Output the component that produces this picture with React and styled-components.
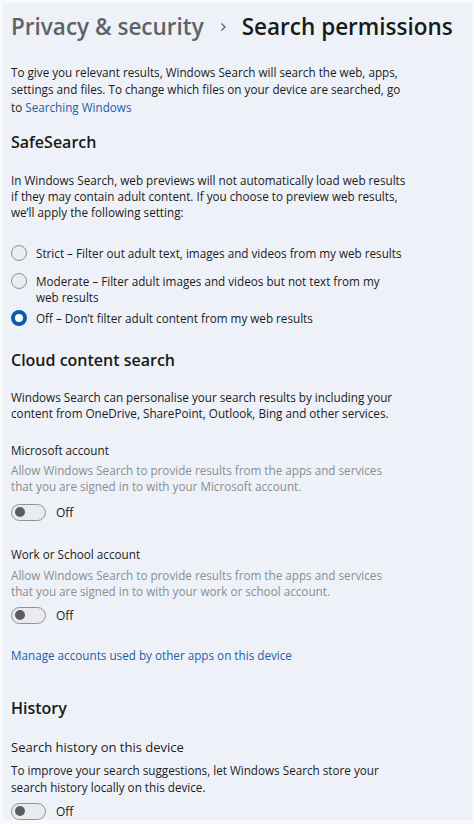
import React from 'react'
import styled, {createGlobalStyle} from 'styled-components'

const GlobalStyle = createGlobalStyle`
  html, body {
    margin: 0;
    padding: 0;
    background: #f8f9fb;
  }
  body {
    font-family: 'Open Sans', 'Noto Sans', 'Liberation Sans', sans-serif;
    font-stretch: 90%;
    color: #1b1b1b;
  }
`

const Panel = styled.div`
  margin: 3px 0 0 3px;
  width: 469px;
  height: 817px;
  padding: 7px 0 0 8px;
  box-sizing: border-box;
  background: #eef2f8;
  overflow: hidden;
  display: flex;
  flex-direction: column;
`

const Breadcrumb = styled.div`
  display: flex;
  align-items: center;
  gap: 15px;
  height: 34px;
  font-size: 22.5px;
  font-weight: 600;
  white-space: nowrap;
`

const Crumb = styled.span`
  color: ${p => (p.$current ? '#1a1a1a' : '#5f6266')};
`

const Chevron = styled.svg`
  width: 8px;
  height: 12px;
  flex: none;
`

const Text = styled.p`
  margin: ${p => p.$mt || 0}px 0 0;
  font-size: ${p => p.$size || 11.7}px;
  line-height: ${p => p.$lh || 16}px;
  color: ${p => (p.$muted ? '#8b8d90' : '#1b1b1b')};
  white-space: nowrap;
`

const Link = styled.a`
  color: #1f5ca8;
  text-decoration: none;
`

const Heading = styled.h2`
  margin: ${p => p.$mt || 0}px 0 0;
  font-size: 16px;
  line-height: 24px;
  font-weight: 600;
  color: #1a1a1a;
`

const RadioList = styled.div`
  display: flex;
  flex-direction: column;
  margin-top: 25px;
`

const RadioRow = styled.label`
  display: flex;
  align-items: flex-start;
  gap: 9px;
  margin-top: ${p => p.$mt || 0}px;
  font-size: 11.7px;
  line-height: 16px;
  color: #1b1b1b;
`

const RadioDot = styled.span`
  flex: none;
  width: 16px;
  height: 16px;
  border-radius: 50%;
  box-sizing: border-box;
  border: ${p => (p.$checked ? '4.5px solid #0b5cad' : '1px solid #8e9196')};
  background: ${p => (p.$checked ? '#ffffff' : '#e9ecf0')};
`

const ToggleRow = styled.div`
  display: flex;
  align-items: center;
  gap: 10px;
  margin-top: ${p => p.$mt || 0}px;
  height: 18px;
  font-size: 12px;
  color: #1b1b1b;
`

const Switch = styled.span`
  width: 35px;
  height: 17px;
  box-sizing: border-box;
  border: 1px solid #8e9196;
  border-radius: 9px;
  background: #e9ebee;
  display: flex;
  align-items: center;
  padding-left: 3px;
`

const Knob = styled.span`
  width: 10px;
  height: 10px;
  border-radius: 50%;
  background: #5b5d60;
`

const LinkLine = styled.div`
  margin-top: ${p => p.$mt || 0}px;
  font-size: 11.7px;
  line-height: 18px;
`

const Toggle = ({mt}) => (
    <ToggleRow $mt={mt}>
        <Switch><Knob/></Switch>
        Off
    </ToggleRow>
)

const radios = [
    {label: ['Strict – Filter out adult text, images and videos from my web results'], mt: 0},
    {label: ['Moderate – Filter adult images and videos but not text from my', 'web results'], mt: 12},
    {label: ['Off – Don’t filter adult content from my web results'], mt: 5, checked: true},
]

const Lines = ({lines}) => lines.map((l, i) => (
    <React.Fragment key={i}>{i > 0 && <br/>}{l}</React.Fragment>
))

const App = () => {
    return (
        <>
            <GlobalStyle/>
            <Panel>
                <Breadcrumb>
                    <Crumb>Privacy &amp; security</Crumb>
                    <Chevron viewBox="0 0 8 12">
                        <path d="M2.5 2.5l3.5 3.5-3.5 3.5" fill="none" stroke="#5f6266" strokeWidth="1.3"/>
                    </Chevron>
                    <Crumb $current>Search permissions</Crumb>
                </Breadcrumb>

                <Text $mt={20} $lh={17.5}>
                    To give you relevant results, Windows Search will search the web, apps,<br/>
                    settings and files. To change which files on your device are searched, go<br/>
                    to <Link href="#">Searching Windows</Link>
                </Text>

                <Heading $mt={14}>SafeSearch</Heading>
                <Text $mt={18}>
                    In Windows Search, web previews will not automatically load web results<br/>
                    if they may contain adult content. If you choose to preview web results,<br/>
                    we’ll apply the following setting:
                </Text>

                <RadioList>
                    {radios.map(r => (
                        <RadioRow key={r.label[0]} $mt={r.mt}>
                            <RadioDot $checked={r.checked}/>
                            <span><Lines lines={r.label}/></span>
                        </RadioRow>
                    ))}
                </RadioList>

                <Heading $mt={22}>Cloud content search</Heading>
                <Text $mt={18} $lh={15.5}>
                    Windows Search can personalise your search results by including your<br/>
                    content from OneDrive, SharePoint, Outlook, Bing and other services.
                </Text>

                <Text $mt={20} $lh={18}>Microsoft account</Text>
                <Text $mt={3} $muted>
                    Allow Windows Search to provide results from the apps and services<br/>
                    that you are signed in to with your Microsoft account.
                </Text>
                <Toggle mt={9}/>

                <Text $mt={24} $lh={18}>Work or School account</Text>
                <Text $mt={4} $muted>
                    Allow Windows Search to provide results from the apps and services<br/>
                    that you are signed in to with your work or school account.
                </Text>
                <Toggle mt={7}/>

                <LinkLine $mt={22}>
                    <Link href="#">Manage accounts used by other apps on this device</Link>
                </LinkLine>

                <Heading $mt={32}>History</Heading>
                <Text $mt={17} $size={13} $lh={20}>Search history on this device</Text>
                <Text $mt={5} $lh={16.5}>
                    To improve your search suggestions, let Windows Search store your<br/>
                    search history locally on this device.
                </Text>
                <Toggle mt={7}/>
            </Panel>
        </>
    )
}

export default App
